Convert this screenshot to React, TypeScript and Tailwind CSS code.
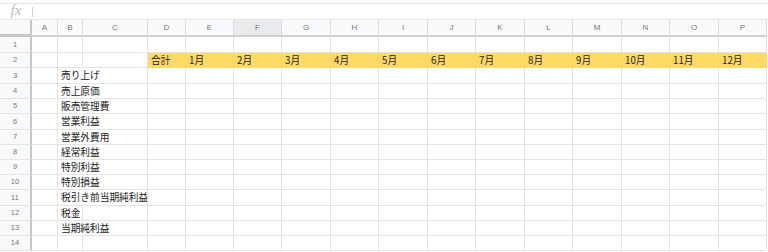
import React from 'react';

const colLetters = ['A', 'B', 'C', 'D', 'E', 'F', 'G', 'H', 'I', 'J', 'K', 'L', 'M', 'N', 'O', 'P'];
const colWidths = [
  'w-[26px]', 'w-[25px]', 'w-[65px]', 'w-[38px]',
  'w-[48px]', 'w-[48px]', 'w-[49px]', 'w-[48px]', 'w-[49px]', 'w-[48px]',
  'w-[49px]', 'w-[48px]', 'w-[49px]', 'w-[48px]', 'w-[49px]', 'w-[48px]',
];
const rowHeights = [
  'h-[16px]', 'h-[15px]', 'h-[16px]', 'h-[15px]', 'h-[15px]', 'h-[16px]', 'h-[15px]',
  'h-[15px]', 'h-[15px]', 'h-[15px]', 'h-[16px]', 'h-[15px]', 'h-[15px]', 'h-[15px]',
];

const headerRow = ['合計', '1月', '2月', '3月', '4月', '5月', '6月', '7月', '8月', '9月', '10月', '11月', '12月'];

const labels: Record<number, string> = {
  3: '売り上げ',
  4: '売上原価',
  5: '販売管理費',
  6: '営業利益',
  7: '営業外費用',
  8: '経常利益',
  9: '特別利益',
  10: '特別損益',
  11: '税引き前当期純利益',
  12: '税金',
  13: '当期純利益',
};

const font = { fontFamily: '"Noto Sans CJK JP", "Noto Sans", sans-serif' };

function Row({ n }: { n: number }) {
  const h = rowHeights[n - 1];
  const label = labels[n];
  const overflow = label && label.length > 2;

  return (
    <div className="flex">
      <div className={`${h} w-[32px] shrink-0 flex items-center justify-center bg-[#f8f9fa] border-r-2 border-b border-r-[#c7c7c7] border-b-[#e2e3e3] text-[7.5px] text-[#777]`} style={{ fontFamily: '"Liberation Sans", sans-serif' }}>
        {n}
      </div>
      {colLetters.map((c, i) => {
        const yellow = n === 2 && i >= 3;
        const isB = i === 1;
        return (
          <div
            key={c}
            className={`${h} ${colWidths[i]} shrink-0 flex items-center pl-[3px] whitespace-nowrap text-[9.7px] text-[#222] border-r border-b ${
              yellow ? 'bg-[#ffd966] border-[#ffd966]' : 'border-[#e2e3e3]'
            } ${isB && overflow ? 'border-r-transparent' : ''}`}
            style={font}
          >
            {yellow ? headerRow[i - 3] : isB && label ? label : ''}
          </div>
        );
      })}
    </div>
  );
}

export default function App() {
  return (
    <div className="w-[768px] h-[252px] bg-white overflow-hidden">
      {/* Formula bar */}
      <div className="pt-[3px]">
        <div className="h-[17px] flex items-center border-t border-b border-[#e2e3e3]">
          <span className="w-[32px] text-center italic text-[15px] text-[#bdbdbd] leading-none -mt-[2px]" style={{ fontFamily: '"Liberation Serif", serif' }}>
            fx
          </span>
          <span className="w-px h-[10px] bg-[#d0d0d0]" />
        </div>
      </div>

      {/* Column headers */}
      <div className="flex">
        <div className="h-[17px] w-[32px] shrink-0 bg-[#f8f9fa] border-r-2 border-b-[3px] border-[#c7c7c7]" />
        {colLetters.map((c, i) => (
          <div
            key={c}
            className={`h-[17px] ${colWidths[i]} shrink-0 flex items-center justify-center border-r border-b-[2px] border-r-[#dadce0] border-b-[#cfd0d1] text-[8px] text-[#777] ${
              c === 'F' ? 'bg-[#e8eaed]' : 'bg-[#f8f9fa]'
            }`}
            style={{ fontFamily: '"Liberation Sans", sans-serif' }}
          >
            {c}
          </div>
        ))}
      </div>

      {Array.from({ length: 14 }, (_, k) => (
        <Row key={k} n={k + 1} />
      ))}
    </div>
  );
}
